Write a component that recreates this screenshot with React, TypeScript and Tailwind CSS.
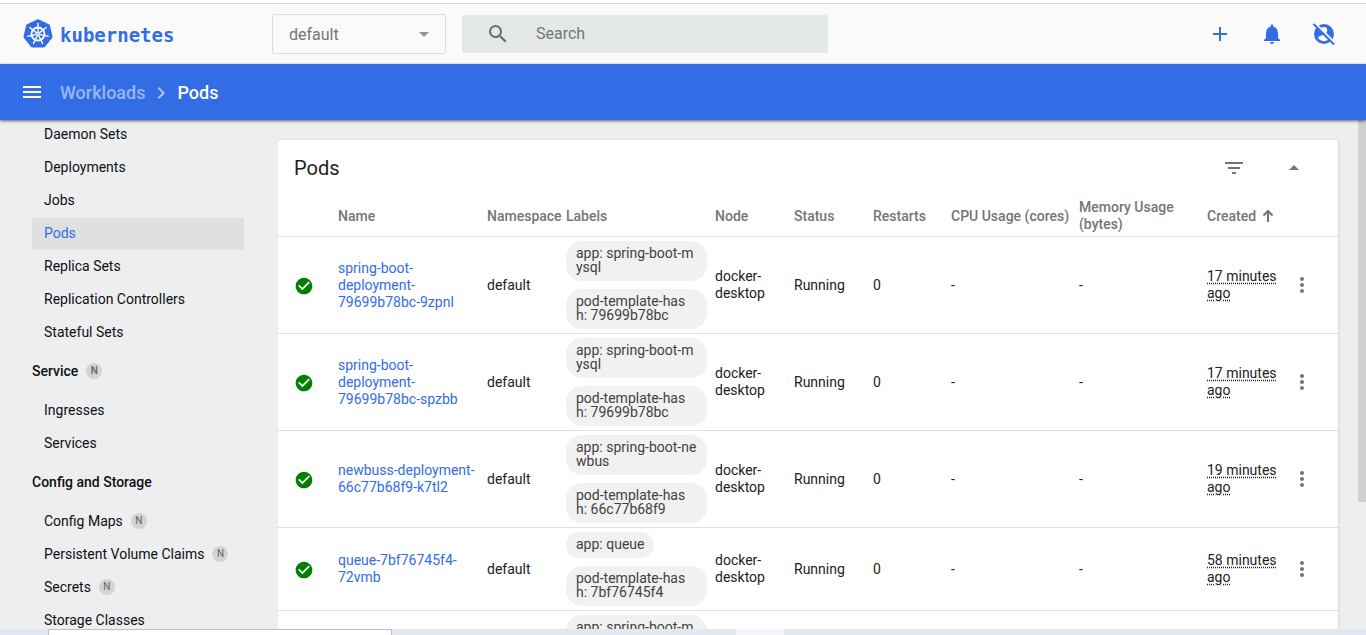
import React, { useState } from 'react';
import {
  MdAdd,
  MdArrowDropDown,
  MdArrowDropUp,
  MdCheckCircle,
  MdChevronRight,
  MdFilterList,
  MdMenu,
  MdMoreVert,
  MdNotifications,
  MdSearch,
} from 'react-icons/md';

interface NavItem {
  label: string;
  section?: boolean;
  namespaced?: boolean;
}

interface Pod {
  name: string;
  labels: string[];
  created: string;
}

const navItems: NavItem[] = [
  { label: 'Daemon Sets' },
  { label: 'Deployments' },
  { label: 'Jobs' },
  { label: 'Pods' },
  { label: 'Replica Sets' },
  { label: 'Replication Controllers' },
  { label: 'Stateful Sets' },
  { label: 'Service', section: true, namespaced: true },
  { label: 'Ingresses' },
  { label: 'Services' },
  { label: 'Config and Storage', section: true },
  { label: 'Config Maps', namespaced: true },
  { label: 'Persistent Volume Claims', namespaced: true },
  { label: 'Secrets', namespaced: true },
  { label: 'Storage Classes' },
];

const pods: Pod[] = [
  {
    name: 'spring-boot-deployment-79699b78bc-9zpnl',
    labels: ['app: spring-boot-mysql', 'pod-template-has\nh: 79699b78bc'],
    created: '17 minutes ago',
  },
  {
    name: 'spring-boot-deployment-79699b78bc-spzbb',
    labels: ['app: spring-boot-mysql', 'pod-template-has\nh: 79699b78bc'],
    created: '17 minutes ago',
  },
  {
    name: 'newbuss-deployment-66c77b68f9-k7tl2',
    labels: ['app: spring-boot-newbus', 'pod-template-has\nh: 66c77b68f9'],
    created: '19 minutes ago',
  },
  {
    name: 'queue-7bf76745f4-72vmb',
    labels: ['app: queue', 'pod-template-has\nh: 7bf76745f4'],
    created: '58 minutes ago',
  },
  {
    name: 'spring-boot-deployment-79699b78bc-x4k2d',
    labels: ['app: spring-boot-mysql', 'pod-template-has\nh: 79699b78bc'],
    created: '58 minutes ago',
  },
];

const spokes = [0, 1, 2, 3, 4, 5, 6];

const KubernetesLogo = () => (
  <svg viewBox="0 0 32 32" className="h-8 w-8" aria-hidden="true">
    <polygon
      points="16,3.200 26,8 28.500,18.800 21.500,27.600 10.500,27.600 3.500,18.800 6,8"
      fill="#326de6"
      stroke="#326de6"
      strokeWidth="4"
      strokeLinejoin="round"
    />
    <g fill="none" stroke="#fff" strokeLinecap="round">
      <circle cx="16" cy="16" r="6.500" strokeWidth="1.800" />
      {spokes.map((i) => (
        <path key={i} d="M16 14.200V5.500" strokeWidth="1.400" transform={`rotate(${(i * 360) / 7} 16 16)`} />
      ))}
    </g>
    <circle cx="16" cy="16" r="1.800" fill="#fff" />
    <circle cx="16" cy="16" r="0.700" fill="#326de6" />
  </svg>
);

const UserDisabledIcon = () => (
  <svg viewBox="0 0 24 24" className="h-6 w-6" aria-hidden="true">
    <circle cx="12" cy="12" r="10" fill="currentColor" />
    <path d="M12 5a3.200 3.200 0 0 1 0 6.400A3.200 3.200 0 0 1 12 5zM6 16c0-2 4-3.100 6-3.100s6 1.100 6 3.100a7.200 7.200 0 0 1-12 0z" fill="#fafafa" />
    <path d="M2.500 0.500l21 21" stroke="#fafafa" strokeWidth="2" />
    <path d="M1.500 2l20.500 20.500" stroke="currentColor" strokeWidth="2" />
  </svg>
);

const SortArrowIcon = () => (
  <svg viewBox="0 0 16 16" className="h-4 w-4 shrink-0" fill="none" stroke="currentColor" strokeWidth="2" aria-hidden="true">
    <path d="M8 14V3M3.500 7.500L8 3l4.500 4.500" />
  </svg>
);

const Header = () => (
  <header className="flex h-[61px] shrink-0 items-center border-t border-[#d6d6d6] bg-[#fafafa] pl-[22px] pr-[30px]">
    <a href="#" className="flex w-[250px] shrink-0 items-center gap-1.5 text-[#326de6]">
      <KubernetesLogo />
      <span className="pt-0.5 font-['DejaVu_Sans_Mono'] text-[19px] font-bold leading-6">kubernetes</span>
    </a>
    <div className="relative w-[174px] shrink-0 text-[#757575]">
      <select
        aria-label="Namespace"
        defaultValue="default"
        className="h-10 w-full appearance-none rounded-xs border border-[#dcdcdc] bg-[#fafafa] pl-4 pt-0.5 text-base"
      >
        <option>default</option>
      </select>
      <MdArrowDropDown className="pointer-events-none absolute right-2.5 top-2 h-6 w-6 text-[#949494]" />
    </div>
    <div className="ml-4 flex h-[38px] w-[366px] items-center rounded-xs bg-[#e4e8e9] pl-6 text-[#6b6b6b]">
      <MdSearch className="h-6 w-6 shrink-0" />
      <input aria-label="Search" placeholder="Search" className="ml-[26px] w-full bg-transparent text-base outline-none placeholder:text-[#757575]" />
    </div>
    <div className="ml-auto flex items-center gap-7 text-[#326de6]">
      <button aria-label="Create new resource"><MdAdd className="h-6 w-6" /></button>
      <button aria-label="Notifications"><MdNotifications className="h-6 w-6" /></button>
      <button aria-label="User"><UserDisabledIcon /></button>
    </div>
  </header>
);

const Toolbar = () => (
  <div className="relative z-10 flex h-14 shrink-0 items-center bg-[#326de6] pl-5 text-lg font-medium text-white shadow-[0_1px_3px_rgba(0,0,0,0.6)]">
    <button aria-label="Toggle navigation"><MdMenu className="h-6 w-6" /></button>
    <a href="#" className="ml-4 pt-0.5 text-white/50">Workloads</a>
    <MdChevronRight className="mx-1 mt-0.5 h-6 w-6 text-white/60" />
    <span className="pt-0.5">Pods</span>
  </div>
);

const NamespacedBadge = () => (
  <span className="ml-2 flex h-4 w-4 items-center justify-center rounded-full bg-[#d1d3d4] pt-px text-[10px] text-[#616161]">N</span>
);

const Sidebar = () => (
  <nav className="-mt-px w-[278px] shrink-0 overflow-hidden pl-8 pr-[34px] text-sm text-[#101010]">
    {navItems.map((item) => {
      if (item.section) {
        return (
          <a key={item.label} href="#" className="my-[7px] flex h-8 items-center pb-0.5 font-medium">
            {item.label}
            {item.namespaced && <NamespacedBadge />}
          </a>
        );
      }
      return (
        <a
          key={item.label}
          href="#"
          className={`mb-px flex h-8 items-center rounded-xs pb-0.5 pl-3 ${item.label === 'Pods' ? 'bg-[#e0e0e0] text-[#326de6]' : ''}`}
        >
          {item.label}
          {item.namespaced && <NamespacedBadge />}
        </a>
      );
    })}
  </nav>
);

const PodRow = ({ pod }: { pod: Pod }) => (
  <tr className="border-t border-[#e0e0e0]">
    <td className="pl-4 pt-0.5">
      <MdCheckCircle className="h-5 w-5 text-[#008000]" />
    </td>
    <td className="pr-3 pt-px">
      <a href="#" className="text-[#326de6]">{pod.name}</a>
    </td>
    <td className="pt-px">default</td>
    <td>
      <div className="flex flex-col items-start gap-2 py-1 pr-2">
        {pod.labels.map((label) => (
          <span
            key={label}
            className={`whitespace-pre-line break-all rounded-2xl bg-[#f1f1f1] px-2.5 pb-[7px] pt-[5px] leading-[14px] text-[#424242] ${label.includes('\n') ? 'w-full' : ''}`}
          >
            {label}
          </span>
        ))}
      </div>
    </td>
    <td className="pr-4">docker-desktop</td>
    <td className="pt-px">Running</td>
    <td className="pt-px">0</td>
    <td className="pt-px">-</td>
    <td className="pt-px">-</td>
    <td>
      <span className="underline decoration-dotted underline-offset-2">{pod.created}</span>
    </td>
    <td>
      <button aria-label="Actions" className="block pl-1 text-[#757575]"><MdMoreVert className="h-6 w-6" /></button>
    </td>
  </tr>
);

const PodsCard = () => {
  const [open, setOpen] = useState(true);

  return (
    <section className="rounded bg-white shadow-[0_1px_3px_rgba(0,0,0,0.2)]">
      <div className="flex h-14 items-center pl-4 pr-8">
        <h2 className="text-xl text-[#212121]">Pods</h2>
        <button aria-label="Filter" className="ml-auto text-[#757575]"><MdFilterList className="h-6 w-6" /></button>
        <button aria-label="Collapse" className="ml-9 text-[#757575]" onClick={() => setOpen(!open)}>
          <MdArrowDropUp className="h-6 w-6" />
        </button>
      </div>
      {open && (
        <table className="w-full table-fixed text-left text-sm leading-[17px] text-[#212121]">
          <colgroup>
            <col className="w-[60px]" />
            <col className="w-[149px]" />
            <col className="w-[79px]" />
            <col className="w-[149px]" />
            <col className="w-[79px]" />
            <col className="w-[79px]" />
            <col className="w-[78px]" />
            <col className="w-[128px]" />
            <col className="w-[128px]" />
            <col className="w-[79px]" />
            <col className="w-[52px]" />
          </colgroup>
          <thead className="text-[#757575]">
            <tr className="h-10">
              <th />
              <th className="pt-px font-medium">Name</th>
              <th className="pt-px font-medium">Namespace</th>
              <th className="pt-px font-medium">Labels</th>
              <th className="pt-px font-medium">Node</th>
              <th className="pt-px font-medium">Status</th>
              <th className="pt-px font-medium">Restarts</th>
              <th className="pt-px font-medium">CPU Usage (cores)</th>
              <th className="pr-4 font-medium">Memory Usage (bytes)</th>
              <th className="pt-px font-medium">
                <span className="flex items-center gap-1">
                  Created <SortArrowIcon />
                </span>
              </th>
              <th />
            </tr>
          </thead>
          <tbody>
            {pods.map((pod) => (
              <PodRow key={pod.name} pod={pod} />
            ))}
          </tbody>
        </table>
      )}
    </section>
  );
};

const App = () => (
  <div className="flex h-screen flex-col overflow-hidden border-t-3 border-white bg-[#edeef0] font-[Roboto,sans-serif]">
    <Header />
    <Toolbar />
    <div className="flex min-h-0 flex-1 overflow-hidden">
      <Sidebar />
      <main className="min-w-0 flex-1 overflow-hidden pr-5 pt-5">
        <PodsCard />
      </main>
      <div className="h-3/4 w-2 shrink-0 bg-[#cfd0d1]" />
    </div>
    {/* Window edge below the page */}
    <div className="flex h-1.5 shrink-0 bg-[#e2e8f0] pl-12">
      <div className="w-[344px] border-x border-t border-[#c0c0c4] bg-white" />
      <div className="ml-[344px] w-12 bg-[#f2f5f9]" />
    </div>
  </div>
);

export default App;
